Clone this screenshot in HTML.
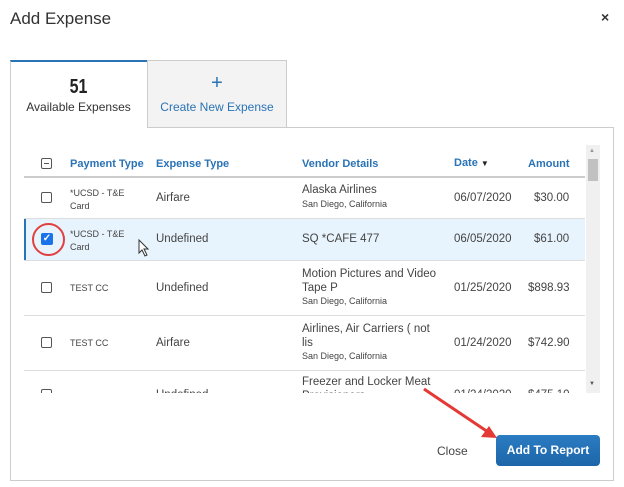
<!DOCTYPE html>
<html><head><style>
*{margin:0;padding:0;box-sizing:border-box}
body{width:624px;height:487px;background:#fff;font-family:"Liberation Sans",sans-serif;position:relative;overflow:hidden;color:#333}
.a{position:absolute}
.hd{color:#2a73b5;font-weight:bold;font-size:11px}
.cb{position:absolute;width:11px;height:11px;border:1px solid #555;border-radius:2px;background:#fff}
.t{font-size:11.5px;color:#444}
.s{font-size:9px;color:#444}
.line{position:absolute;left:24px;width:561px;height:1px;background:#ddd}
</style></head><body>
<div class="a" style="left:10px;top:9px;font-size:17px;color:#333">Add Expense</div>
<div class="a" style="left:601px;top:9px;font-size:14px;font-weight:bold;color:#333">×</div>
<div class="a" style="left:10px;top:128px;width:604px;height:353px;border:1px solid #ccc;border-top:none"></div>
<div class="a" style="left:287px;top:127px;width:327px;height:1px;background:#ccc"></div>
<div class="a" style="left:10px;top:60px;width:137px;height:69px;border-left:1px solid #ccc;border-top:2px solid #2a73b5;background:#fff"></div>
<div class="a" style="left:147px;top:60px;width:140px;height:68px;border:1px solid #ccc;background:#f3f3f3"></div>
<div class="a" style="left:10px;top:76px;width:137px;text-align:center;font-size:20px;color:#222;font-weight:bold;transform:scaleX(.8)">51</div>
<div class="a" style="left:10px;top:100px;width:137px;text-align:center;font-size:12px;color:#333">Available Expenses</div>
<div class="a" style="left:147px;top:72px;width:140px;text-align:center;font-size:20px;color:#2a73b5">+</div>
<div class="a" style="left:147px;top:100px;width:140px;text-align:center;font-size:12px;color:#2a73b5">Create New Expense</div>
<div class="a" style="left:586px;top:145px;width:14px;height:248px;background:#f0f0f0"></div>
<div class="a" style="left:588px;top:159px;width:10px;height:22px;background:#c1c1c1"></div>
<div class="a" style="left:589px;top:148px;font-size:6px;color:#999">▲</div>
<div class="a" style="left:589px;top:381px;font-size:6px;color:#555">▼</div>
<div class="cb" style="left:41px;top:158px"><div style="position:absolute;left:2px;top:4px;width:5px;height:1px;background:#555"></div></div>
<div class="a hd" style="left:70px;top:158px">Payment Type</div>
<div class="a hd" style="left:156px;top:158px">Expense Type</div>
<div class="a hd" style="left:302px;top:158px">Vendor Details</div>
<div class="a hd" style="left:454px;top:157px">Date <span style="color:#222;font-size:8px">▼</span></div>
<div class="a hd" style="left:528px;top:158px">Amount</div>
<div class="line" style="top:176px;height:2px;background:#ccc"></div>
<div class="cb" style="left:41px;top:192px"></div>
<div class="a s" style="left:70px;top:187px;line-height:13px">*UCSD - T&amp;E<br>Card</div>
<div class="a t" style="left:156px;top:192px">Airfare</div>
<div class="a t" style="left:302px;top:184px">Alaska Airlines</div>
<div class="a s" style="left:302px;top:199px">San Diego, California</div>
<div class="a t" style="left:454px;top:192px">06/07/2020</div>
<div class="a t" style="left:534px;top:192px">$30.00</div>
<div class="line" style="top:218px"></div>
<div class="a" style="left:24px;top:219px;width:561px;height:41px;background:#e8f4fd;border-left:2px solid #2a73b5"></div>
<div class="a" style="left:41px;top:233px;width:12px;height:12px;background:#1a73e8;border-radius:2px;color:#fff;font-size:10px;text-align:center;line-height:12px;font-weight:bold">✓</div>
<div class="a" style="left:32px;top:223px;width:33px;height:33px;border:2px solid #e04040;border-radius:50%"></div>
<div class="a s" style="left:70px;top:228px;line-height:13px">*UCSD - T&amp;E<br>Card</div>
<svg class="a" style="left:138px;top:239px" width="12" height="18"><path d="M1 1 L1 14 L4 11 L7 17 L9 16 L6 10 L10 10 Z" fill="#fff" stroke="#333" stroke-width="1"/></svg>
<div class="a t" style="left:156px;top:233px">Undefined</div>
<div class="a t" style="left:302px;top:233px">SQ *CAFE 477</div>
<div class="a t" style="left:454px;top:233px">06/05/2020</div>
<div class="a t" style="left:534px;top:233px">$61.00</div>
<div class="line" style="top:260px"></div>
<div class="cb" style="left:41px;top:282px"></div>
<div class="a s" style="left:70px;top:283px">TEST CC</div>
<div class="a t" style="left:156px;top:282px">Undefined</div>
<div class="a t" style="left:302px;top:267px;line-height:14px">Motion Pictures and Video<br>Tape P</div>
<div class="a s" style="left:302px;top:296px">San Diego, California</div>
<div class="a t" style="left:454px;top:282px">01/25/2020</div>
<div class="a t" style="left:528px;top:282px">$898.93</div>
<div class="line" style="top:315px"></div>
<div class="cb" style="left:41px;top:337px"></div>
<div class="a s" style="left:70px;top:338px">TEST CC</div>
<div class="a t" style="left:156px;top:337px">Airfare</div>
<div class="a t" style="left:302px;top:322px;line-height:14px">Airlines, Air Carriers ( not<br>lis</div>
<div class="a s" style="left:302px;top:351px">San Diego, California</div>
<div class="a t" style="left:454px;top:337px">01/24/2020</div>
<div class="a t" style="left:528px;top:337px">$742.90</div>
<div class="line" style="top:370px"></div>
<div class="a" style="left:24px;top:371px;width:561px;height:22px;overflow:hidden">
<div class="a t" style="left:278px;top:4px;line-height:14px">Freezer and Locker Meat<br>Provisioners</div>
<div class="a t" style="left:132px;top:18px">Undefined</div>
<div class="a t" style="left:430px;top:18px">01/24/2020</div>
<div class="a t" style="left:504px;top:18px">$475.10</div>
<div class="cb" style="left:17px;top:18px"></div>
</div>
<div class="a" style="left:437px;top:444px;font-size:12px;color:#444">Close</div>
<div class="a" style="left:496px;top:435px;width:104px;height:31px;background:linear-gradient(#2b7cc3,#1d65a8);border-radius:4px;color:#fff;font-weight:bold;font-size:12px;text-align:center;line-height:31px">Add To Report</div>
<svg class="a" style="left:0;top:0" width="624" height="487"><line x1="424" y1="389" x2="488" y2="432" stroke="#e53935" stroke-width="3"/><polygon points="497,438 481,437 489,426" fill="#e53935"/></svg>
</body></html>
